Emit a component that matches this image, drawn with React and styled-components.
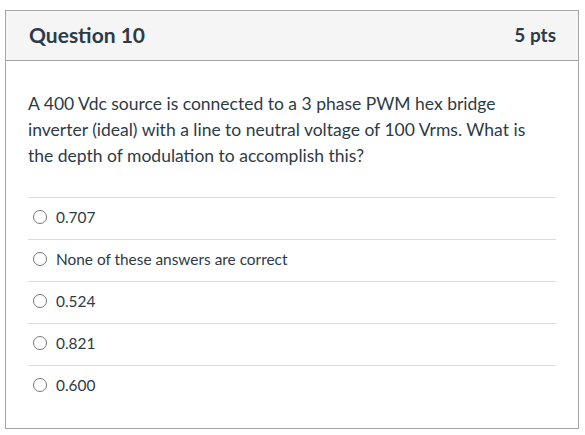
import styled, { createGlobalStyle } from "styled-components";

const answers = ["0.707", "None of these answers are correct", "0.524", "0.821", "0.600"];

export default function App() {
  return (
    <>
      <GlobalStyle />
      <QuestionCard>
        <Header>
          <Title>Question 10</Title>
          <Points>5 pts</Points>
        </Header>
        <Body>
          <QuestionText>
            A 400 Vdc source is connected to a 3 phase PWM hex bridge inverter (ideal) with a line to
            neutral voltage of 100 Vrms. What is the depth of modulation to accomplish this?
          </QuestionText>
          <AnswerList>
            {answers.map((a) => (
              <AnswerRow key={a}>
                <Radio />
                <AnswerLabel>{a}</AnswerLabel>
              </AnswerRow>
            ))}
          </AnswerList>
        </Body>
      </QuestionCard>
    </>
  );
}

const GlobalStyle = createGlobalStyle`
  body {
    margin: 0;
    background: #fff;
    font-family: Lato, "Liberation Sans", sans-serif;
    color: #2d3b45;
  }
`;

const QuestionCard = styled.div`
  box-sizing: border-box;
  margin: 10px 0 0 5px;
  width: 574px;
  border: 1px solid #a5a5a5;
  background: #fff;
`;

const Header = styled.div`
  box-sizing: border-box;
  height: 50px;
  display: flex;
  align-items: center;
  justify-content: space-between;
  padding: 0 22px 3px 23px;
  background: #f5f5f5;
  border-bottom: 1px solid #a5a5a5;
`;

const Title = styled.div`
  font-size: 21px;
  font-weight: 700;
`;

const Points = styled.div`
  font-size: 19px;
  font-weight: 700;
`;

const Body = styled.div`
  padding: 30px 22px 21px 22px;
`;

const QuestionText = styled.p`
  margin: 0 0 28px 0;
  padding-right: 14px;
  font-size: 17.5px;
  line-height: 26px;
`;

const AnswerList = styled.div`
  display: flex;
  flex-direction: column;
`;

const AnswerRow = styled.label`
  box-sizing: border-box;
  height: 42px;
  display: flex;
  align-items: center;
  gap: 9px;
  padding: 0 0 3px 5px;
  border-top: 1px solid #dcdcdc;
`;

const Radio = styled.span`
  box-sizing: border-box;
  width: 14px;
  height: 14px;
  border-radius: 50%;
  border: 1px solid #777;
  background: #fff;
  flex-shrink: 0;
`;

const AnswerLabel = styled.span`
  font-size: 15.4px;
`;
